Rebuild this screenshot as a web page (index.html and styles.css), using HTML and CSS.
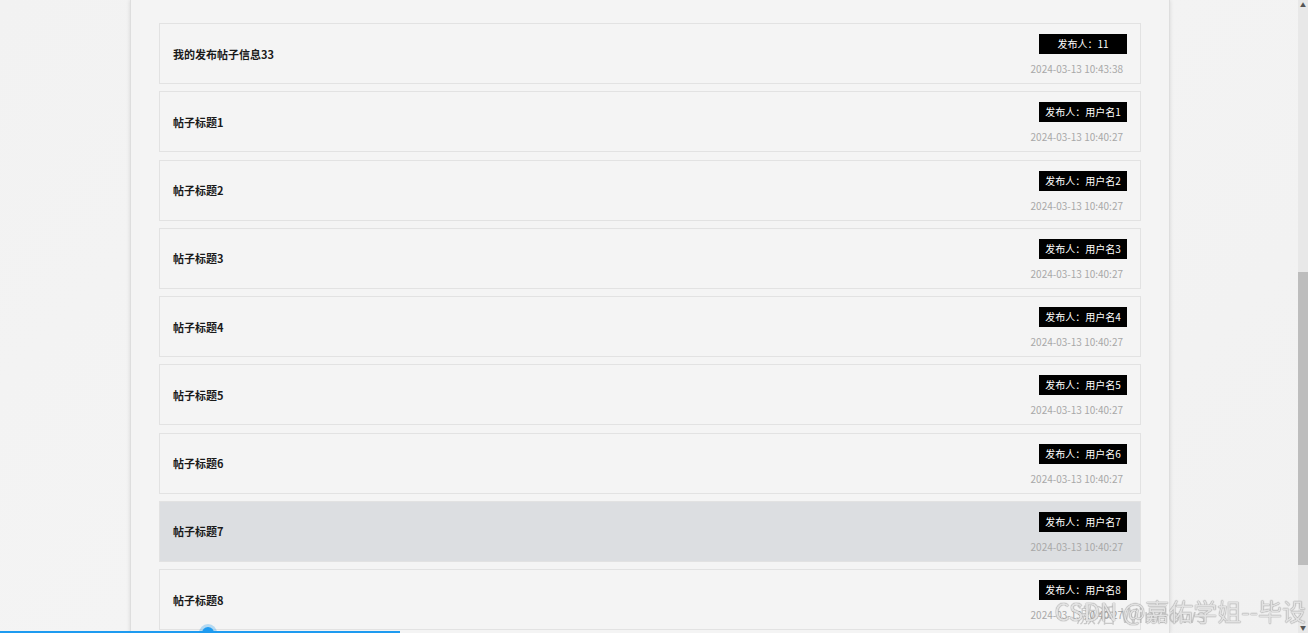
FILE: index.html
```html
<!DOCTYPE html>
<html lang="zh-CN">
<head>
    <meta charset="UTF-8">
    <meta name="viewport" content="width=device-width, initial-scale=1.0">
    <title>我的发布</title>
    <link rel="stylesheet" href="styles.css">
</head>
<body>
    <div class="screen">
        <div class="viewport">
            <div class="panel">
                <div class="post">
                    <div class="post-title">我的发布帖子信息33</div>
                    <div class="post-meta">
                        <span class="author">发布人：11</span>
                        <span class="date">2024-03-13 10:43:38</span>
                    </div>
                </div>
                <div class="post">
                    <div class="post-title">帖子标题1</div>
                    <div class="post-meta">
                        <span class="author">发布人：用户名1</span>
                        <span class="date">2024-03-13 10:40:27</span>
                    </div>
                </div>
                <div class="post">
                    <div class="post-title">帖子标题2</div>
                    <div class="post-meta">
                        <span class="author">发布人：用户名2</span>
                        <span class="date">2024-03-13 10:40:27</span>
                    </div>
                </div>
                <div class="post">
                    <div class="post-title">帖子标题3</div>
                    <div class="post-meta">
                        <span class="author">发布人：用户名3</span>
                        <span class="date">2024-03-13 10:40:27</span>
                    </div>
                </div>
                <div class="post">
                    <div class="post-title">帖子标题4</div>
                    <div class="post-meta">
                        <span class="author">发布人：用户名4</span>
                        <span class="date">2024-03-13 10:40:27</span>
                    </div>
                </div>
                <div class="post">
                    <div class="post-title">帖子标题5</div>
                    <div class="post-meta">
                        <span class="author">发布人：用户名5</span>
                        <span class="date">2024-03-13 10:40:27</span>
                    </div>
                </div>
                <div class="post">
                    <div class="post-title">帖子标题6</div>
                    <div class="post-meta">
                        <span class="author">发布人：用户名6</span>
                        <span class="date">2024-03-13 10:40:27</span>
                    </div>
                </div>
                <div class="post active">
                    <div class="post-title">帖子标题7</div>
                    <div class="post-meta">
                        <span class="author">发布人：用户名7</span>
                        <span class="date">2024-03-13 10:40:27</span>
                    </div>
                </div>
                <div class="post">
                    <div class="post-title">帖子标题8</div>
                    <div class="post-meta">
                        <span class="author">发布人：用户名8</span>
                        <span class="date">2024-03-13 10:40:27</span>
                    </div>
                </div>
            </div>
        </div>
        <div class="scrollbar">
            <div class="scroll-arrow">&#9650;</div>
            <div class="scroll-track"><div class="scroll-thumb"></div></div>
            <div class="scroll-arrow">&#9660;</div>
        </div>
    </div>

    <!-- 视频水印 / 进度条 -->
    <div class="watermark">
        <span class="win">激活 Windows</span>
        <span class="csdn">CSDN @嘉佑学姐--毕设</span>
    </div>
    <div class="progress"><div class="progress-dot"></div></div>
</body>
</html>
```

FILE: styles.css
```css
html, body {
    margin: 0;
    height: 100%;
    overflow: hidden;
}

body {
    font-family: "Noto Sans CJK SC", "Noto Sans", sans-serif;
    background-color: #f2f2f2;
    color: #222;
}

.screen {
    display: flex;
    height: 633px;
}

.viewport {
    flex: 1;
    display: flex;
    justify-content: center;
    overflow: hidden;
    background: linear-gradient(135deg, #f2f2f2 0%, #f4f4f4 40%, #f1f1f1 100%);
}

.panel {
    width: 982px;
    margin-left: 2px;
    padding: 23px 28px 0;
    background-color: #f4f4f4;
    box-shadow: 0 0 4px rgba(0, 0, 0, 0.12);
    border-left: 1px solid #dedede;
    border-right: 1px solid #dedede;
    display: flex;
    flex-direction: column;
    gap: 7.25px;
}

.post {
    height: 59px;
    flex-shrink: 0;
    border: 1px solid #e2e2e2;
    background-color: #f4f4f4;
    display: flex;
    align-items: center;
    justify-content: space-between;
    padding: 0 13px 0 13px;
}

.post.active {
    background-color: #dcdee1;
}

.post-title {
    font-size: 11px;
    font-weight: bold;
    color: #1a1a1a;
}

.post-meta {
    display: flex;
    flex-direction: column;
    align-items: flex-end;
    gap: 8px;
    padding-top: 2px;
}

.author {
    width: 88px;
    height: 20px;
    line-height: 20px;
    background-color: #000;
    color: #fff;
    font-size: 10px;
    text-align: center;
}

.date {
    font-size: 10px;
    line-height: 13px;
    color: #a8a8a8;
    margin-right: 4px;
}

.scrollbar {
    width: 10px;
    background-color: #e8e8e8;
    display: flex;
    flex-direction: column;
}

.scroll-arrow {
    height: 10px;
    font-size: 6px;
    line-height: 10px;
    text-align: center;
    color: #555;
}

.scroll-track {
    flex: 1;
    padding-top: 262px;
}

.scroll-thumb {
    height: 293px;
    background-color: #bdbdbd;
}

.watermark {
    position: fixed;
    right: 2px;
    bottom: 4px;
    width: 270px;
    height: 36px;
}

.watermark .win {
    position: absolute;
    left: 40px;
    bottom: 0;
    font-size: 20px;
    color: rgba(120, 120, 120, 0.35);
}

.watermark .csdn {
    position: absolute;
    right: 0;
    top: 0;
    font-size: 24px;
    color: rgba(255, 255, 255, 0.75);
    text-shadow: 0 0 1px #888, 0 0 1px #888;
    white-space: nowrap;
}

.progress {
    position: fixed;
    left: 0;
    bottom: 0;
    width: 400px;
    height: 2px;
    background-color: #1e9bf0;
}

.progress-dot {
    position: absolute;
    left: 202px;
    top: -4px;
    width: 12px;
    height: 12px;
    border-radius: 50%;
    background-color: #1e9bf0;
    box-shadow: 0 0 0 3px rgba(30, 155, 240, 0.3);
}
```
